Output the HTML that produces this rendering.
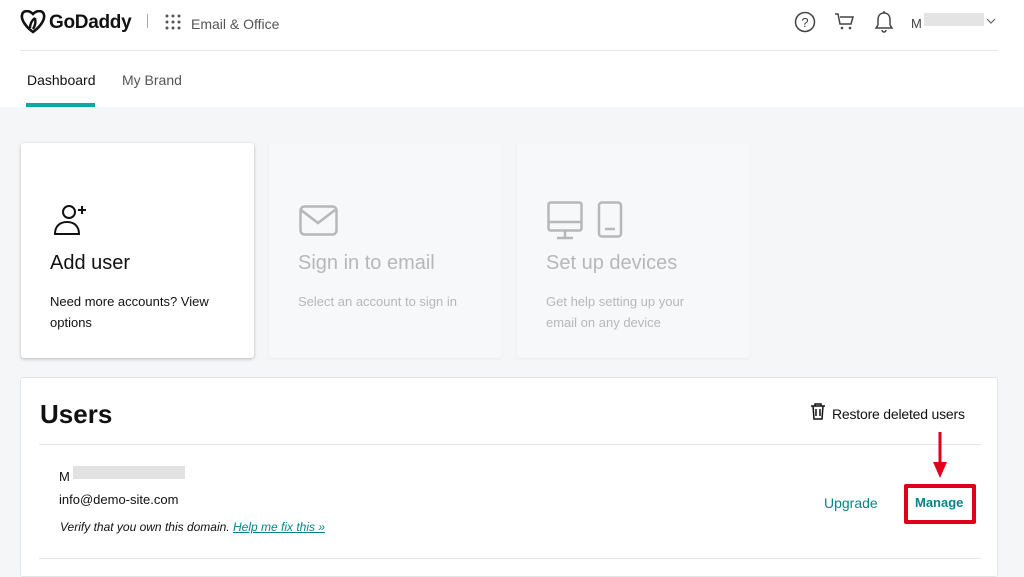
<!DOCTYPE html>
<html><head><meta charset="utf-8"><style>
*{margin:0;padding:0;box-sizing:border-box}
body{width:1024px;height:567px;overflow:hidden;background:#f5f6f7;font-family:"Liberation Sans",sans-serif;color:#111;position:relative}
.hdr{position:absolute;left:0;top:0;width:1024px;height:107px;background:#fff}
.line{position:absolute;left:20px;top:50px;width:978px;height:1px;background:#e3e6e6}
.abs{position:absolute}
.card{position:absolute;top:143px;width:233px;height:215px;border-radius:3px}
.c1{left:21px;background:#fff;box-shadow:0 1px 3px rgba(0,0,0,.25)}
.c2{left:269px;background:#f7f8f9;box-shadow:0 1px 2px rgba(0,0,0,.05)}
.c3{left:517px;background:#f7f8f9;box-shadow:0 1px 2px rgba(0,0,0,.05)}
.ct{position:absolute;left:29px;top:109px;font-size:20px}
.cd{position:absolute;left:29px;top:148px;font-size:13px;line-height:21px;width:172px}
.grey{color:#b5b8ba}
.panel{position:absolute;left:20px;top:377px;width:978px;height:200px;background:#fff;border:1px solid #e3e6e6;border-radius:3px}
</style></head><body>
<div class="hdr"></div>
<svg class="abs" style="left:20px;top:10px" width="26" height="24" viewBox="0 0 26 24"><path d="M13 4C9 0 3 0 2 5c-1 5 4 12 11 17 7-5 12-12 11-17-1-5-7-5-11-1z" fill="none" stroke="#111" stroke-width="2.6"/><path d="M15 8c-3 2-5 6-5 10M15 8c1 4 0 8-2 11" fill="none" stroke="#111" stroke-width="2.4"/></svg>
<div class="abs" style="left:49px;top:12px;font-size:19px;font-weight:bold;letter-spacing:-0.3px">GoDaddy</div>
<div class="abs" style="left:147px;top:14px;width:1px;height:14px;background:#aaa"></div>
<svg class="abs" style="left:164px;top:14px" width="18" height="16"><g fill="#555"><circle cx="3" cy="2" r="1.5"/><circle cx="9" cy="2" r="1.5"/><circle cx="15" cy="2" r="1.5"/><circle cx="3" cy="8" r="1.5"/><circle cx="9" cy="8" r="1.5"/><circle cx="15" cy="8" r="1.5"/><circle cx="3" cy="14" r="1.5"/><circle cx="9" cy="14" r="1.5"/><circle cx="15" cy="14" r="1.5"/></g></svg>
<div class="abs" style="left:191px;top:16px;font-size:14px;color:#555">Email &amp; Office</div>
<svg class="abs" style="left:794px;top:11px" width="22" height="22"><circle cx="11" cy="11" r="9.5" fill="none" stroke="#444" stroke-width="1.5"/><text x="11" y="16" font-size="13" text-anchor="middle" fill="#444" font-family="Liberation Sans">?</text></svg>
<svg class="abs" style="left:834px;top:12px" width="22" height="20"><path d="M1 2h3l2 10h11l2-7H6" fill="none" stroke="#444" stroke-width="1.5"/><circle cx="8" cy="16" r="1.3" fill="#444"/><circle cx="16" cy="16" r="1.3" fill="#444"/></svg>
<svg class="abs" style="left:874px;top:10px" width="20" height="24"><path d="M10 3c-4 0-6 3-6 7v5l-2 3h16l-2-3v-5c0-4-2-7-6-7zM10 1v2M8 20a2 2 0 0 0 4 0" fill="none" stroke="#444" stroke-width="1.5"/></svg>
<div class="abs" style="left:911px;top:16px;font-size:13px;color:#444">M</div>
<div class="abs" style="left:924px;top:13px;width:60px;height:13px;background:#e4e4e4"></div>
<svg class="abs" style="left:986px;top:17px" width="10" height="8"><path d="M1 2l4 4 4-4" fill="none" stroke="#666" stroke-width="1.2"/></svg>
<div class="line"></div>
<div class="abs" style="left:27px;top:72px;font-size:14px">Dashboard</div>
<div class="abs" style="left:26px;top:103px;width:69px;height:4px;background:#09a8a8"></div>
<div class="abs" style="left:122px;top:72px;font-size:14px;color:#555">My Brand</div>

<div class="card c1">
<svg class="abs" style="left:31px;top:60px" width="38" height="34"><circle cx="17" cy="9" r="6" fill="none" stroke="#111" stroke-width="2"/><path d="M3 31c0-8 5-12 12-12s12 4 12 12z" fill="none" stroke="#111" stroke-width="2"/><path d="M26 7h8M30 3v8" stroke="#111" stroke-width="2"/></svg>
<div class="ct">Add user</div>
<div class="cd" style="width:180px">Need more accounts? View options</div></div>
<div class="card c2">
<svg class="abs" style="left:30px;top:62px" width="40" height="32"><rect x="1.5" y="1.5" width="36" height="28" rx="4" fill="none" stroke="#b5b8ba" stroke-width="2.5"/><path d="M2 5l17 13 17-13" fill="none" stroke="#b5b8ba" stroke-width="2.5"/></svg>
<div class="ct grey">Sign in to email</div>
<div class="cd grey" style="width:190px">Select an account to sign in</div></div>
<div class="card c3">
<svg class="abs" style="left:30px;top:58px" width="80" height="40"><rect x="1.5" y="1.5" width="33" height="28" rx="2" fill="none" stroke="#b5b8ba" stroke-width="2.5"/><path d="M2 21h32M18 30v6M10 37h16" stroke="#b5b8ba" stroke-width="2.5"/><rect x="52" y="1.5" width="22" height="34" rx="3" fill="none" stroke="#b5b8ba" stroke-width="2.5"/><path d="M58 28h10" stroke="#b5b8ba" stroke-width="2.5"/></svg>
<div class="ct grey">Set up devices</div>
<div class="cd grey">Get help setting up your email on any device</div></div>

<div class="panel">
<div class="abs" style="left:19px;top:21px;font-size:26px;font-weight:bold">Users</div>
<svg class="abs" style="left:789px;top:25px" width="16" height="17"><path d="M1 3h14M5 3V1h6v2M3 3l1 13h8l1-13M6 6v7M10 6v7" fill="none" stroke="#111" stroke-width="1.5"/></svg>
<div class="abs" style="left:811px;top:28px;font-size:14px;letter-spacing:-0.2px">Restore deleted users</div>
<div class="abs" style="left:18px;top:66px;width:942px;height:1px;background:#e3e6e6"></div>
<div class="abs" style="left:38px;top:91px;font-size:13px">M</div>
<div class="abs" style="left:52px;top:88px;width:112px;height:13px;background:#e2e2e2"></div>
<div class="abs" style="left:38px;top:114px;font-size:13px">info@demo-site.com</div>
<div class="abs" style="left:39px;top:142px;font-size:12px;font-style:italic">Verify that you own this domain. <span style="color:#09838a;text-decoration:underline">Help me fix this »</span></div>
<div class="abs" style="left:803px;top:117px;font-size:14px;color:#09838a">Upgrade</div>
<div class="abs" style="left:883px;top:106px;width:72px;height:40px;border:4px solid #e0001a;border-radius:2px"></div>
<div class="abs" style="left:894px;top:117px;font-size:13px;font-weight:bold;color:#09838a">Manage</div>
<svg class="abs" style="left:911px;top:54px" width="16" height="48"><path d="M8 0v34" stroke="#e0001a" stroke-width="3"/><path d="M1 30l7 16 7-16z" fill="#e0001a"/></svg>
<div class="abs" style="left:18px;top:180px;width:942px;height:1px;background:#e3e6e6"></div>
</div>
</body></html>
